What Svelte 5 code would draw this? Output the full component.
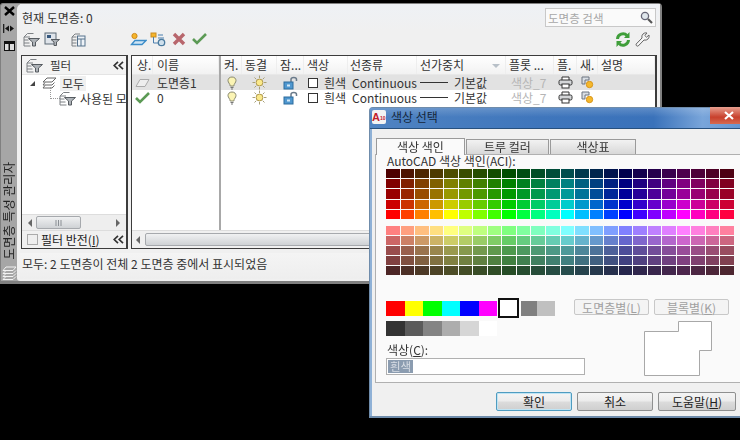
<script>
  const hues = Array.from({ length: 24 }, (_, i) => i * 15);
  const hsv = (h, s, v) => {
    const f = (n) => {
      const k = (n + h / 60) % 6;
      return Math.round(255 * (v - v * s * Math.max(0, Math.min(k, 4 - k, 1))));
    };
    return `rgb(${f(5)},${f(3)},${f(1)})`;
  };
  const topRows = [0.3, 0.5, 0.6, 0.8, 1];
  const lowRows = [1, 0.8, 0.6, 0.5, 0.3];
  const top = topRows.flatMap((v) => hues.map((h) => hsv(h, 1, v)));
  const low = lowRows.flatMap((v) => hues.map((h) => hsv(h, 0.5, v)));
  const std = ['#ff0000', '#ffff00', '#00ff00', '#00ffff', '#0000ff', '#ff00ff'];
  const greys = ['#333333', '#5b5b5b', '#848484', '#adadad', '#d6d6d6', '#ffffff'];
  const layers = [
    { name: '도면층1', sel: true, cur: false },
    { name: '0', sel: false, cur: true }
  ];
</script>

{#snippet filterIcon()}
  <svg class="ic" width="17" height="15" viewBox="0 0 17 15" fill="none">
    <path d="M1 5 L4.5 1.5 H10.5 M1 5 H7 M1 8 H5.5 M1 11 H6.5 M1 14 H7.5 M1 5 V14" stroke="#7c8084" />
    <path d="M5.5 6.5 H16.5 L12.5 10 V14 H9.5 V10 Z" fill="#aeb3b8" stroke="#565b60" />
  </svg>
{/snippet}

{#snippet chevrons()}
  <svg class="ic" width="11" height="9" viewBox="0 0 11 9" fill="none">
    <path d="M5 .8 L1.2 4.5 L5 8.2 M10 .8 L6.2 4.5 L10 8.2" stroke="#333" stroke-width="1.7" />
  </svg>
{/snippet}

{#snippet bulb()}
  <svg class="ic" width="10" height="14" viewBox="0 0 10 14" fill="none">
    <path d="M5 1 C2.4 1 1 2.7 1 4.6 C1 6.6 3 7.6 3.2 10 H6.8 C7 7.6 9 6.6 9 4.6 C9 2.7 7.6 1 5 1 Z" fill="#fbf4b4" stroke="#8a8a70" />
    <path d="M3.5 11.5 H6.5 M4 13 H6" stroke="#777" />
  </svg>
{/snippet}

{#snippet sun()}
  <svg class="ic" width="15" height="15" viewBox="0 0 15 15" fill="none">
    <path d="M7.5 .5 V3 M7.5 12 V14.5 M.5 7.5 H3 M12 7.5 H14.5 M2.5 2.5 L4.3 4.3 M10.7 10.7 L12.5 12.5 M12.5 2.5 L10.7 4.3 M4.3 10.7 L2.5 12.5" stroke="#a8a078" />
    <circle cx="7.5" cy="7.5" r="3.4" fill="#fbe98a" stroke="#b09a50" />
  </svg>
{/snippet}

{#snippet lock()}
  <svg class="ic" width="15" height="14" viewBox="0 0 15 14" fill="none">
    <path d="M8 6 V3.5 C8 .8 13.5 .8 13.5 3.5 V5" stroke="#6a7a8a" stroke-width="1.5" />
    <rect x="1" y="6" width="9" height="7" fill="#4f97cf" stroke="#2d6c9e" />
    <rect x="4" y="8.5" width="3" height="2" fill="#d4e9f7" />
  </svg>
{/snippet}

{#snippet printer()}
  <svg class="ic" width="15" height="13" viewBox="0 0 15 13" fill="none">
    <path d="M4 4 V1 H11 V4" stroke="#333" fill="#fff" />
    <rect x="1" y="4" width="13" height="5" rx="1.5" fill="#d4d6d8" stroke="#333" />
    <rect x="4" y="8" width="7" height="4" fill="#fff" stroke="#333" />
  </svg>
{/snippet}

{#snippet newVp()}
  <svg class="ic" width="13" height="13" viewBox="0 0 13 13" fill="none">
    <path d="M1 1 H8 V4 H4 V8 H1 Z" fill="#d9dee4" stroke="#6c7480" />
    <circle cx="8.5" cy="8.5" r="3.2" fill="#f5b82c" stroke="#d9961a" />
  </svg>
{/snippet}

{#snippet check(s = 15)}
  <svg class="ic" width={s} height={s - 2} viewBox="0 0 15 13" fill="none">
    <path d="M1 7 L5 11 L14 2" stroke="#5c9a55" stroke-width="2.6" />
  </svg>
{/snippet}

{#snippet scrollGrip()}
  <svg class="ic" width="8" height="6" viewBox="0 0 8 6"><path d="M1 0V6M3.5 0V6M6 0V6" stroke="#8a8f94" /></svg>
{/snippet}

<div class="layer-win">
  <aside class="strip">
    <svg class="ic" width="11" height="10" viewBox="0 0 11 10"><path d="M1 1 L10 9 M10 1 L1 9" stroke="#000" stroke-width="2.4" /></svg>
    <svg class="ic hide" width="11" height="9" viewBox="0 0 11 9"><path d="M.7 0V9" stroke="#111" stroke-width="1.2" /><path d="M6 1.5V7.5L2 4.5ZM7 1.5V7.5L11 4.5Z" fill="#111" /></svg>
    <svg class="ic tabs" width="11" height="10" viewBox="0 0 11 10"><rect width="11" height="10" fill="#111" /><rect x="1" y="3" width="3.5" height="6" fill="#ddd" /><rect x="6" y="3" width="4" height="6" fill="#ddd" /></svg>
    <span class="vert">도면층 특성 관리자</span>
    <svg class="ic stack" width="15" height="15" viewBox="0 0 15 15" fill="none"><path d="M1 4.5 L4 1 H14 L11 4.5 Z M1 7.5 L4 4.5 M11 7.5 L14 4.5 M1 7.5 H11 M1 10.5 L4 7.5 M11 10.5 L14 7.5 M1 10.5 H11 M1 13.5 L4 10.5 M1 13.5 H11 L14 10.5" stroke="#f2f2f2" /></svg>
  </aside>

  <div class="main">
    <div class="current">
      <span class="cur-text">현재 도면층: 0</span>
      <div class="search"><span>도면층 검색</span>
        <svg class="ic" width="13" height="13" viewBox="0 0 13 13" fill="none"><circle cx="5" cy="5" r="3.6" fill="#dfe6ec" stroke="#667" stroke-width="1.3" /><path d="M8 8 L12 12" stroke="#555" stroke-width="2.2" /></svg>
      </div>
    </div>

    <div class="toolbar">
      <span class="tool">{@render filterIcon()}</span>
      <span class="tool tool2">
        <svg class="ic" width="16" height="14" viewBox="0 0 16 14" fill="none"><rect x="1" y="1" width="11" height="11" fill="#dfe4ea" stroke="#5b6875" /><rect x="3" y="3" width="4" height="3" fill="#35577d" /><path d="M7 7.5 H15.5 L12.5 10 V13.5 H10 V10 Z" fill="#aeb3b8" stroke="#565b60" /></svg>
      </span>
      <span class="tool tool3">
        <svg class="ic" width="15" height="15" viewBox="0 0 15 15" fill="none"><path d="M1 5 L4 2 H9 M1 5 H5.5 M1 8 H5.5 M1 11 H5.5 M1 14 H5.5 M1 5 V14" stroke="#7c8084" /><rect x="6.5" y="4" width="7.5" height="10" fill="#eef3f8" stroke="#56728c" /><path d="M6.5 7 H14 M10 7 V14" stroke="#56728c" /></svg>
      </span>
      <span class="tool">
        <svg class="ic" width="17" height="14" viewBox="0 0 17 14" fill="none"><path d="M1.5 12.5 L5 8.5 H16 L12 12.5 Z" fill="#cfe4f4" stroke="#3b8cc8" stroke-width="1.3" /><circle cx="4.5" cy="4" r="2.6" fill="#f5b52c" stroke="#d08a18" /></svg>
      </span>
      <span class="tool tool5">
        <svg class="ic" width="16" height="15" viewBox="0 0 16 15" fill="none"><rect x="1" y="1" width="5" height="4" fill="#f5b52c" stroke="#c98c20" /><path d="M8 3 H13 M8 6 H14 M3.5 5 V11 H8" stroke="#4b7fae" /><circle cx="11.5" cy="10.5" r="3.2" fill="#cfe0ec" stroke="#4a7a9e" stroke-width="1.3" /></svg>
      </span>
      <span class="tool">
        <svg class="ic" width="14" height="14" viewBox="0 0 14 14" fill="none"><path d="M2 2 L12 12 M12 2 L2 12" stroke="#b8666c" stroke-width="3.4" /></svg>
      </span>
      <span class="tool">{@render check()}</span>
      <span class="tool-spacer"></span>
      <span class="tool">
        <svg class="ic" width="16" height="15" viewBox="0 0 16 15" fill="none"><path d="M2.5 7 A5.5 5.5 0 0 1 12 3.5 M13.5 8 A5.5 5.5 0 0 1 4 11.5" stroke="#3f9e3a" stroke-width="3" /><path d="M14.5 0 V6 H9 Z M1.5 15 V9 H7 Z" fill="#3f9e3a" /></svg>
      </span>
      <span class="tool wrench">
        <svg class="ic" width="15" height="15" viewBox="0 0 15 15" fill="none"><path d="M14 3 L11.5 5.2 L9.8 3.5 L12 1 A4 4 0 0 0 7 6 L1.2 12 A1.5 1.5 0 0 0 3.2 14 L9 8 A4 4 0 0 0 14 3 Z" fill="#f5f5f5" stroke="#666" /></svg>
      </span>
    </div>

    <div class="panels">
      <section class="filters">
        <header class="f-head">
          {@render filterIcon()}
          <span class="f-title">필터</span>
          <span class="push">{@render chevrons()}</span>
        </header>
        <div class="tree">
          <div class="node">
            <span class="tri"></span>
            <svg class="ic" width="15" height="14" viewBox="0 0 15 14" fill="none"><path d="M1 5 L5 1 H14 L10 5 Z M1 8 L3 5.5 M10 8 L12.5 5.5 M1 8 H10 M1 11 L3 8.5 M10 11 L12.5 8.5 M1 11 H10" stroke="#666" /></svg>
            <span class="node-sel">모두</span>
          </div>
          <div class="node child">
            <span class="dots"></span>
            {@render filterIcon()}
            <span class="node-text">사용된 모</span>
          </div>
        </div>
        <div class="hscroll narrow">
          <span class="arr-l"></span>
          <span class="thumb t1">{@render scrollGrip()}</span>
          <span class="arr-r"></span>
        </div>
        <footer class="f-foot">
          <span class="cb big"></span>
          <span class="invert">필터 반전(<u>I</u>)</span>
          <span class="push">{@render chevrons()}</span>
        </footer>
      </section>

      <section class="table">
        <div class="cols">
          <div class="frozen">
            <div class="row head fz"><span>상.</span><span>이름</span></div>
            {#each layers as l}
              <div class="row fz" class:sel={l.sel}>
                <span class="center">
                  {#if l.cur}
                    {@render check()}
                  {:else}
                    <svg class="ic" width="15" height="8" viewBox="0 0 15 8"><path d="M1 7.5 L5 .5 H14 L10 7.5 Z" fill="#eee" stroke="#aaa" /></svg>
                  {/if}
                </span>
                <span class="nm">{l.name}</span>
              </div>
            {/each}
          </div>
          <div class="scrolling">
            <div class="row head cl">
              <span>켜.</span><span>동결</span><span>잠...</span><span>색상</span><span>선종류</span>
              <span class="sorted">선가중치<i class="sort"></i></span>
              <span>플롯 ...</span><span>플.</span><span>새.</span><span>설명</span>
            </div>
            {#each layers as l}
              <div class="row cl" class:sel={l.sel}>
                <span class="center">{@render bulb()}</span>
                <span class="center">{@render sun()}</span>
                <span class="center">{@render lock()}</span>
                <span class="color"><i class="cb"></i>흰색</span>
                <span>Continuous</span>
                <span class="lw"><i class="line"></i>기본값</span>
                <span class="dim">색상_7</span>
                <span class="center">{@render printer()}</span>
                <span class="center">{@render newVp()}</span>
                <span></span>
              </div>
            {/each}
          </div>
        </div>
        <div class="hscroll wide">
          <span class="arr-l"></span>
          <span class="thumb t2">{@render scrollGrip()}</span>
        </div>
      </section>
    </div>

    <div class="status">모두: 2 도면층이 전체 2 도면층 중에서 표시되었음</div>
  </div>
</div>

<div class="dialog">
  <div class="titlebar">
    <span class="app-ic">A<small>10</small></span>
    <span class="ti">색상 선택</span>
    <span class="close">
      <svg class="ic" width="10" height="9" viewBox="0 0 10 9"><path d="M1 1 L9 8 M9 1 L1 8" stroke="#fff" stroke-width="2.2" /></svg>
    </span>
  </div>
  <div class="dlg-body">
    <div class="tabs-row">
      <span class="tab active">색상 색인</span>
      <span class="tab t-b">트루 컬러</span>
      <span class="tab t-c">색상표</span>
    </div>
    <div class="pane">
      <div class="aci-label">AutoCAD 색상 색인(ACI):</div>
      <div class="palette">{#each top as c}<i style="background:{c}"></i>{/each}</div>
      <div class="palette second">{#each low as c}<i style="background:{c}"></i>{/each}</div>

      <div class="std-area">
        <div class="swatches">
          <div class="std">
            {#each std as c}<i style="background:{c}"></i>{/each}
            <i class="picked"></i>
            <i class="s8"></i>
            <i class="s9"></i>
          </div>
          <div class="grey">{#each greys as c}<i style="background:{c}"></i>{/each}</div>
        </div>
        <div class="by-btns">
          <span class="btn off">도면층별(<u>L</u>)</span>
          <span class="btn off">블록별(<u>K</u>)</span>
        </div>
      </div>

      <div class="bottom">
        <div class="col-field">
          <div class="col-label">색상(<u>C</u>):</div>
          <div class="input"><span class="picked-text">흰색</span></div>
        </div>
        <svg class="preview" width="69" height="56" viewBox="0 0 69 56"><path d="M.5 10.5 H34.5 V.5 H67.5 V29.5 H55.5 V54.5 H.5 Z" fill="#fff" stroke="#a8a8a8" /></svg>
      </div>
    </div>
    <div class="actions">
      <span class="btn dlg def">확인</span>
      <span class="btn dlg">취소</span>
      <span class="btn dlg">도움말(<u>H</u>)</span>
    </div>
  </div>
</div>

<style>
  :global(body) {
    margin: 0;
    background: #000;
    width: 740px;
    height: 440px;
    overflow: hidden;
    position: relative;
    font-family: "Noto Sans CJK KR", "Noto Sans", sans-serif;
    font-size: 12px;
    color: #333;
    filter: blur(0.35px);
  }
  .ic { display: block; flex: none; }
  i { display: block; font-style: normal; }

  .layer-win {
    position: absolute;
    left: 0;
    top: 3px;
    width: 662px;
    height: 281px;
    box-sizing: border-box;
    display: flex;
    background: #a6a6a6;
    border: 1px solid #808080;
    border-width: 1px 2px 3px 1px;
    border-radius: 3px 4px 0 0;
  }
  .strip {
    width: 16px;
    flex: none;
    display: flex;
    flex-direction: column;
    align-items: center;
    padding-top: 2px;
    box-sizing: border-box;
  }
  .hide { margin-top: 8px; margin-left: -1px; }
  .tabs { margin-top: 8px; }
  .vert {
    margin-top: auto;
    writing-mode: vertical-rl;
    text-orientation: sideways;
    transform: rotate(180deg);
    font-size: 12.5px;
    line-height: 14px;
    color: #222;
  }
  .stack { margin: 6px 0 0; }

  .main {
    flex: 1;
    min-width: 0;
    display: flex;
    flex-direction: column;
    background: #f0f0f0;
    border-radius: 5px 0 0 3px;
    padding: 0 1px 0 3px;
  }
  .current {
    height: 27px;
    flex: none;
    display: flex;
    justify-content: space-between;
    align-items: center;
    background: linear-gradient(#eef1f5, #f0f0f0);
    padding: 0 3px 0 2px;
  }
  .cur-text { color: #333; }
  .search {
    width: 111px;
    height: 19px;
    box-sizing: border-box;
    border: 1px solid #c8c8c8;
    background: #fafafa;
    display: flex;
    justify-content: space-between;
    align-items: center;
    padding: 0 2px 0 2px;
    color: #a8a8a8;
    font-size: 11.5px;
  }
  .toolbar {
    height: 24px;
    flex: none;
    display: flex;
    align-items: flex-start;
    padding: 1px 9px 0 3px;
    box-sizing: border-box;
  }
  .tool { width: 20px; display: flex; justify-content: flex-start; }
  .tool2 { margin-right: 7px; margin-left: 1px; }
  .tool3 { margin-right: 39px; }
  .tool5 { margin-right: 2px; }
  .tool-spacer { flex: 1; }
  .wrench { width: 15px; }

  .panels {
    height: 194px;
    flex: none;
    display: flex;
    gap: 3px;
    padding-left: 1px;
  }
  .filters, .table {
    box-sizing: border-box;
    border: 1px solid #3c3c3c;
    border-width: 1px 2px 1px 1px;
    background: #fff;
    display: flex;
    flex-direction: column;
  }
  .filters { width: 107px; flex: none; }
  .table { flex: 1; min-width: 0; margin-right: 2px; }
  .f-head {
    height: 18px;
    flex: none;
    display: flex;
    align-items: center;
    gap: 7px;
    padding: 0 2px 0 4px;
    background: #f3f3f3;
    border-bottom: 1px solid #e4e4e4;
  }
  .f-title { font-size: 11.5px; }
  .push { margin-left: auto; }
  .tree { flex: 1; padding-top: 1px; overflow: hidden; }
  .node { height: 15px; line-height: 15px; display: flex; align-items: center; white-space: nowrap; }
  .tri {
    width: 0;
    height: 0;
    margin: 0 7px 0 8px;
    border-left: 5px solid transparent;
    border-bottom: 5px solid #444;
  }
  .node-sel { background: #f0f0f0; padding: 0 2px; margin-left: 3px; line-height: 15px; }
  .child { padding-left: 28px; position: relative; }
  .dots {
    position: absolute;
    left: 28px;
    top: -4px;
    width: 9px;
    height: 11px;
    border-left: 1px dotted #999;
    border-bottom: 1px dotted #999;
  }
  .child .ic { position: relative; margin-left: 9px; }
  .node-text { margin-left: 4px; }

  .hscroll {
    height: 16px;
    flex: none;
    display: flex;
    align-items: center;
    background: #eee;
    border-top: 1px solid #ddd;
    box-sizing: border-box;
    padding: 0 6px 0 6px;
  }
  .arr-l, .arr-r { width: 0; height: 0; border: 4px solid transparent; }
  .arr-l { border-right-color: #666; border-left-width: 0; }
  .arr-r { border-left-color: #666; border-right-width: 0; margin-left: auto; }
  .thumb {
    height: 13px;
    display: flex;
    align-items: center;
    justify-content: center;
    box-sizing: border-box;
    border: 1px solid #a6a9ad;
    border-radius: 2px;
    background: linear-gradient(#f0f1f2, #cfd2d5);
  }
  .t1 { width: 45px; margin-left: 4px; }
  .t2 { flex: 1; margin-left: 5px; }
  .wide { height: 18px; background: #f0f0f0; padding-left: 4px; padding-right: 0; }
  .f-foot {
    height: 17px;
    flex: none;
    display: flex;
    align-items: center;
    padding: 0 2px 0 5px;
    background: #f0f0f0;
    border-top: 1px solid #ddd;
    line-height: 16px;
  }
  .invert { margin-left: 3px; white-space: nowrap; color: #222; }
  .cb {
    width: 8px;
    height: 8px;
    flex: none;
    border: 1px solid #333;
    background: #fff;
    margin-right: 6px;
  }
  .cb.big { width: 9px; height: 9px; border-color: #aaa; background: #eee; margin-right: 0; }

  .cols { flex: 1; display: flex; min-height: 0; }
  .frozen {
    width: 87px;
    flex: none;
    border-right: 2px solid #a8a8a8;
  }
  .scrolling { flex: 1; min-width: 0; }
  .row {
    display: grid;
    height: 15px;
    line-height: 15px;
    align-items: center;
    white-space: nowrap;
    overflow: hidden;
  }
  .row.head {
    height: 19px;
    background: linear-gradient(#fff, #f2f2f2);
    border-bottom: 1px solid #e8e8e8;
    box-sizing: border-box;
  }
  .row.head span { padding-left: 3px; border-right: 1px solid #eee; line-height: 18px; overflow: hidden; }
  .fz { grid-template-columns: 21px 1fr; }
  .cl { grid-template-columns: 21px 35px 27px 44px 69px 89px 48px 23px 21px 1fr; }
  .row.fz.head span:first-child { padding-left: 5px; }
  .row.head.fz span:last-child { padding-left: 4px; }
  .row.cl:not(.head) > span:nth-child(5) { padding-left: 4px; }
  .row.cl.head > span:nth-child(5) { padding-left: 2px; }
  .sel { background: #e2e2e2; }
  .center { display: flex; justify-content: center; align-items: center; height: 15px; }
  .nm { padding-left: 4px; }
  .color { display: flex; align-items: center; padding-left: 4px; }
  .lw { display: flex; align-items: center; padding-left: 3px; }
  .line { width: 28px; height: 1px; background: #333; margin-right: 6px; }
  .dim { color: #b5b5b5; padding-left: 5px; }
  .sorted { position: relative; }
  .sort {
    position: absolute;
    right: 5px;
    top: 8px;
    border: 4px solid transparent;
    border-top: 4px solid #b8c0c8;
  }

  .status {
    margin-top: 4px;
    height: 26px;
    flex: none;
    padding-left: 2px;
    line-height: 22px;
    background: linear-gradient(#f4f4f4, #eee);
    color: #333;
  }

  .dialog {
    position: absolute;
    left: 369px;
    top: 107px;
    width: 380px;
    height: 311px;
    box-sizing: border-box;
    background: #8fb1d6;
    border: 1px solid #6f8cab;
    border-bottom-width: 2px;
    display: flex;
    flex-direction: column;
    border-radius: 4px 4px 0 0;
  }
  .titlebar {
    height: 21px;
    flex: none;
    display: flex;
    align-items: center;
    padding: 0 0 2px 2px;
    box-sizing: border-box;
    background:
      linear-gradient(rgba(255, 255, 255, .18), rgba(255, 255, 255, 0) 45%),
      linear-gradient(90deg, #4f83c2 0%, #3f76bc 45%, #3a72ba 75%, #79a5da 88%, #5f92cf 100%);
    border-bottom: 1px solid #27507e;
    position: relative;
    color: #15263a;
  }
  .app-ic {
    width: 14px;
    height: 14px;
    background: #f3f3f3;
    color: #c2202a;
    font: bold 11px/14px "Liberation Sans", sans-serif;
    display: flex;
    border-radius: 2px;
  }
  .app-ic small { font-size: 5px; line-height: 16px; }
  .ti { margin-left: 5px; font-size: 12px; line-height: 14px; }
  .close {
    position: absolute;
    left: 340px;
    top: -1px;
    width: 40px;
    height: 17px;
    background: linear-gradient(#e8a090, #c8402c 60%, #d66a50);
    display: flex;
    align-items: center;
    padding-left: 14px;
    box-sizing: border-box;
  }
  .dlg-body {
    flex: 1;
    min-height: 0;
    background: #f0f0f0;
    margin-left: 2px;
    padding: 9px 0 0 3px;
    display: flex;
    flex-direction: column;
  }
  .tabs-row {
    display: flex;
    height: 16px;
    align-items: flex-end;
    flex: none;
    position: relative;
    z-index: 1;
  }
  .tab {
    box-sizing: border-box;
    height: 15px;
    border: 1px solid #9a9a9a;
    border-bottom: 0;
    background: linear-gradient(#f2f2f2, #d8d8d8);
    text-align: center;
    font-size: 12px;
    line-height: 14px;
    margin-right: 1px;
  }
  .tab.active { width: 89px; height: 17px; background: #fafafa; line-height: 15px; margin-left: 1px; margin-bottom: -1px; }
  .t-b { width: 83px; }
  .t-c { width: 86px; }
  .pane {
    height: 229px;
    flex: none;
    box-sizing: border-box;
    background: #fafafa;
    border: 1px solid #b0b0b0;
    padding: 0 0 0 10px;
  }
  .aci-label { height: 13px; line-height: 12px; padding-left: 1px; color: #333; }
  .palette {
    width: 348px;
    margin-top: 1px;
    display: grid;
    grid-template-columns: repeat(24, 1fr);
    grid-template-rows: repeat(5, 1fr);
    gap: 1px;
    height: 50px;
  }
  .palette.second { margin-top: 7px; height: 49px; }
  .std-area { display: flex; margin-top: 22px; }
  .swatches { width: 188px; }
  .std {
    height: 22px;
    display: grid;
    grid-template-columns: repeat(6, 18.5px) 24px 16px 18px;
    align-items: center;
  }
  .std i { height: 15px; }
  .std .picked { height: 20px; width: 21px; box-sizing: border-box; border: 2px solid #111; background: #fff; margin-left: 1px; }
  .s8 { background: #808080; }
  .s9 { background: #c0c0c0; }
  .grey {
    display: grid;
    grid-template-columns: repeat(6, 18.5px);
    margin-top: 2px;
  }
  .grey i { height: 15px; }
  .by-btns { display: flex; gap: 5px; }
  .btn {
    box-sizing: border-box;
    display: flex;
    align-items: center;
    justify-content: center;
    white-space: pre;
    border: 1px solid #8e8f8f;
    border-radius: 2px;
    color: #222;
    background: linear-gradient(#f4f4f4 0%, #ececec 48%, #dcdcdc 52%, #cfcfcf 100%);
  }
  .btn.off {
    width: 75px;
    height: 16px;
    margin-top: 2px;
    color: #a0a0a0;
    background: #f4f4f4;
    border-color: #c8c8c8;
  }
  .bottom { display: flex; position: relative; height: 60px; }
  .col-field { margin-top: 6px; }
  .col-label { height: 16px; line-height: 15px; margin-left: 1px; }
  .input {
    width: 199px;
    height: 17px;
    box-sizing: border-box;
    border: 1px solid #b0b0b0;
    background: #fff;
    padding: 1px;
    display: flex;
  }
  .picked-text { background: #8b9cb0; color: #d8dde4; width: 25px; line-height: 13px; font-size: 11.5px; text-align: center; }
  .preview { display: block; margin: -15px 0 0 59px; flex: none; }
  .actions {
    flex: 1;
    display: flex;
    gap: 5px;
    padding: 9px 0 0 121px;
    align-items: flex-start;
  }
  .dlg { width: 76px; height: 19px; flex: none; }
  .dlg:last-child { width: 78px; }
  .def { border-color: #4f9cc0; box-shadow: inset 0 0 0 1px #bfe4f4; }
</style>
